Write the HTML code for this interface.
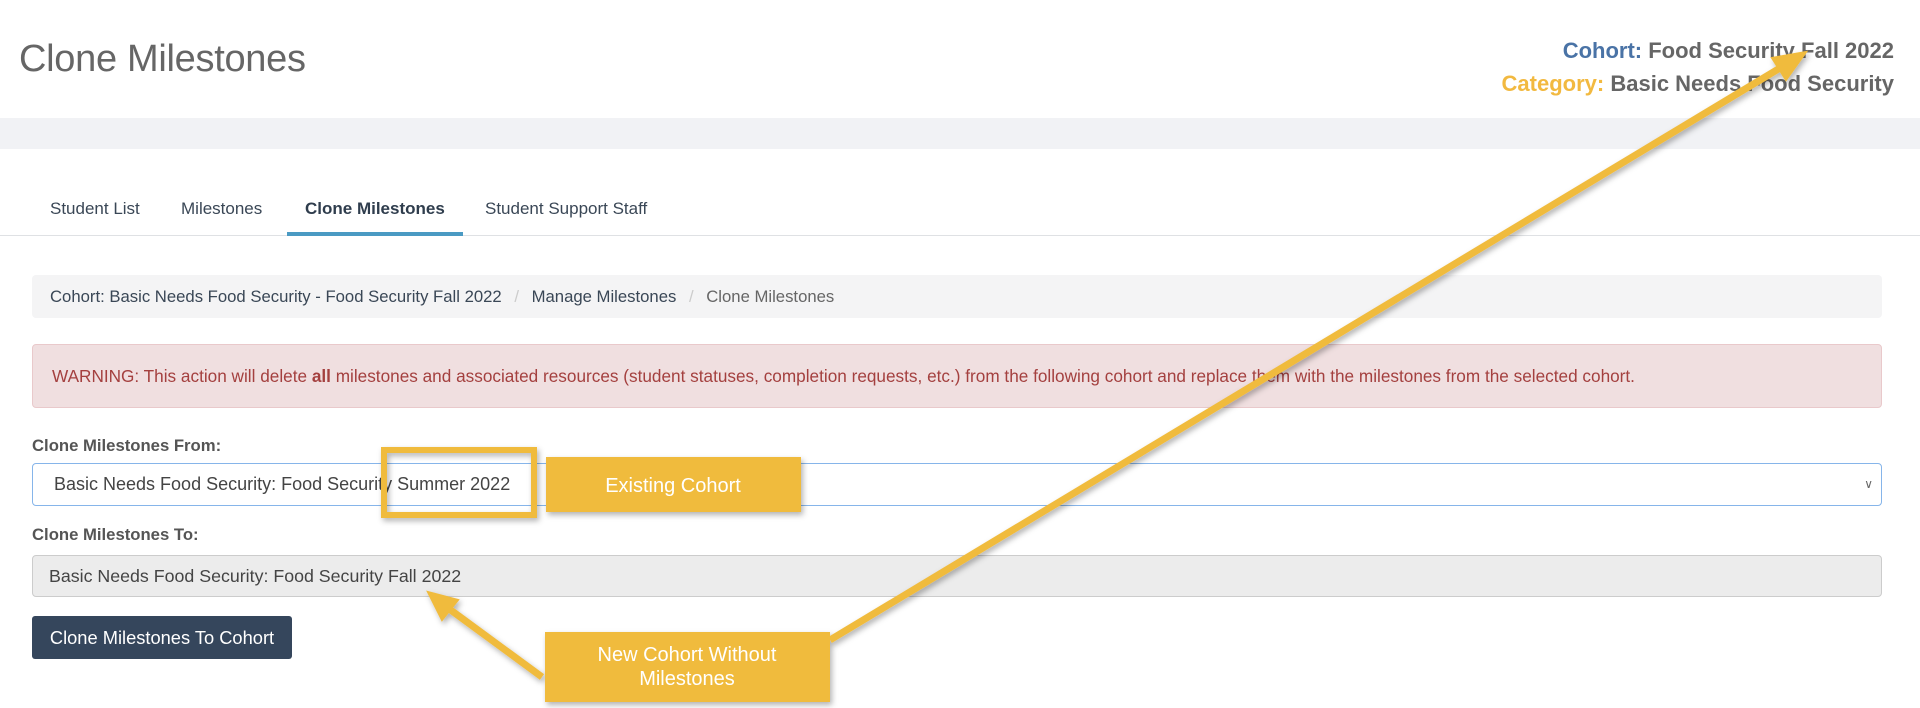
<!DOCTYPE html>
<html><head><meta charset="utf-8"><style>
*{box-sizing:border-box;margin:0;padding:0}
body{width:1920px;height:708px;overflow:hidden;background:#fff;font-family:"Liberation Sans",sans-serif;position:relative;color:#333}
.a{position:absolute;white-space:nowrap}
</style></head><body>
<div class="a" style="left:19px;top:38px;font-size:38px;color:#666;letter-spacing:-0.3px">Clone Milestones</div>
<div class="a" style="right:26px;top:34px;font-size:22px;color:#666;text-align:right;line-height:33px;font-weight:bold">
<div><span style="color:#4a73a6">Cohort:</span> Food Security Fall 2022</div>
<div><span style="color:#f2b940">Category:</span> Basic Needs Food Security</div>
</div>
<div class="a" style="left:0;top:118px;width:1920px;height:31px;background:#f1f2f5"></div>
<div class="a" style="left:0;top:235px;width:1920px;height:1px;background:#dfe1e4"></div>
<div class="a" style="left:287px;top:232px;width:176px;height:4px;background:#4a9ac3"></div>
<div class="a" style="left:50px;top:199px;font-size:17px;color:#3a4756">Student List</div>
<div class="a" style="left:181px;top:199px;font-size:17px;color:#3a4756">Milestones</div>
<div class="a" style="left:305px;top:199px;font-size:17px;color:#2f3d4d;font-weight:bold">Clone Milestones</div>
<div class="a" style="left:485px;top:199px;font-size:17px;color:#3a4756">Student Support Staff</div>
<div class="a" style="left:32px;top:275px;width:1850px;height:43px;background:#f4f4f5;border-radius:4px;font-size:16.7px;line-height:43px;padding-left:18px;color:#3a4756">Cohort: Basic Needs Food Security - Food Security Fall 2022 <span style="color:#ccc;margin:0 8px">/</span> Manage Milestones <span style="color:#ccc;margin:0 8px">/</span> <span style="color:#666">Clone Milestones</span></div>
<div class="a" style="left:32px;top:344px;width:1850px;height:64px;background:#f0dfe0;border:1px solid #e9c9cb;border-radius:4px;font-size:17.2px;line-height:62px;padding-left:19px;color:#a4403f">WARNING: This action will delete <b>all</b> milestones and associated resources (student statuses, completion requests, etc.) from the following cohort and replace them with the milestones from the selected cohort.</div>
<div class="a" style="left:32px;top:436px;font-size:16.7px;font-weight:bold;color:#555">Clone Milestones From:</div>
<div class="a" style="left:32px;top:463px;width:1850px;height:43px;border:1px solid #86b5ea;border-radius:4px;font-size:18px;line-height:41px;padding-left:21px;color:#444">Basic Needs Food Security: Food Security Summer 2022<span style="position:absolute;right:8px;top:0;font-size:12px;color:#666">&#x2228;</span></div>
<div class="a" style="left:32px;top:525px;font-size:16.7px;font-weight:bold;color:#555">Clone Milestones To:</div>
<div class="a" style="left:32px;top:555px;width:1850px;height:42px;background:#ececec;border:1px solid #ccc;border-radius:4px;font-size:17.8px;line-height:40px;padding-left:16px;color:#444">Basic Needs Food Security: Food Security Fall 2022</div>
<div class="a" style="left:32px;top:616px;width:260px;height:43px;background:#35465c;border-radius:3px;font-size:18.3px;line-height:43px;text-align:center;color:#fff">Clone Milestones To Cohort</div>
<svg class="a" style="left:0;top:0" width="1920" height="708">
<defs><filter id="s"><feDropShadow dx="2" dy="3" stdDeviation="3" flood-opacity="0.3"/></filter></defs>
<g filter="url(#s)" fill="#f0bb3e" stroke="#f0bb3e">
<line x1="830" y1="640" x2="1790" y2="62" stroke-width="7"/>
<polygon points="1806,52 1772,58 1786,80" stroke-width="2"/>
<line x1="542" y1="677" x2="437" y2="600" stroke-width="7"/>
<polygon points="428,592 442,620 458,600" stroke-width="2"/>
<rect x="384" y="450" width="150" height="65" fill="none" stroke-width="6"/>
<rect x="546" y="457" width="255" height="55" stroke="none"/>
<rect x="545" y="632" width="285" height="70" stroke="none"/>
</g>
<text x="673" y="492" fill="#fff" font-size="20" text-anchor="middle" font-family="Liberation Sans">Existing Cohort</text>
<text x="687" y="661" fill="#fff" font-size="20" text-anchor="middle" font-family="Liberation Sans">New Cohort Without</text>
<text x="687" y="685" fill="#fff" font-size="20" text-anchor="middle" font-family="Liberation Sans">Milestones</text>
</svg>
</body></html>
